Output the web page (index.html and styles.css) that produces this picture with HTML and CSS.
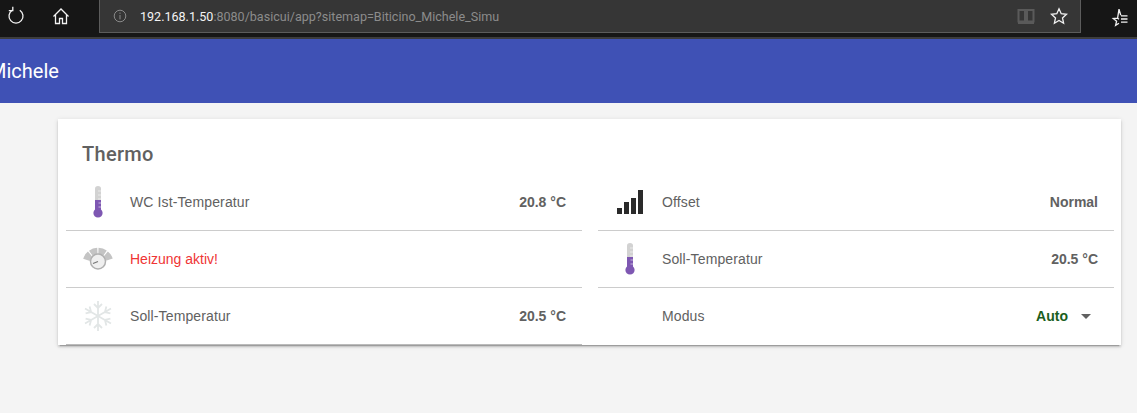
FILE: index.html
```html
<!DOCTYPE html>
<html lang="en">
<head>
<meta charset="UTF-8">
<title>Thermo</title>
<link rel="stylesheet" href="styles.css">
</head>
<body>
<div class="browser">
    <div class="nav">
        <svg class="tool" width="20" height="20" viewBox="0 0 20 20"><path d="M6.200 4.200A7 7 0 1 0 13.800 4.200" /><path d="M6.800 0.800V4.600H2.800" /></svg>
        <svg class="tool" width="20" height="20" viewBox="0 0 20 20"><path d="M2.500 10.500L10 3l7.500 7.500" /><path d="M4.500 9v8.500h4v-5h3v5h4V9" /></svg>
    </div>
    <div class="address">
        <svg class="info" width="14" height="14" viewBox="0 0 14 14"><circle cx="7" cy="7" r="5.800" /><path d="M7 6v4.400M7 3.600v1.200" /></svg>
        <span class="url"><b>192.168.1.50</b>:8080/basicui/app?sitemap=Biticino_Michele_Simu</span>
        <svg class="reader" width="18" height="16" viewBox="0 0 18 16"><path d="M1.500 2h6.500v11.500h-6.500zM10 2h6.500v11.500h-6.500zM1 15h16" /></svg>
        <svg class="tool star" width="18" height="18" viewBox="0 0 18 18"><path d="M9 1.800l2.200 4.900 5.300.6-4 3.600 1.100 5.300L9 13.500l-4.600 2.700 1.100-5.300-4-3.600 5.300-.6z" /></svg>
    </div>
    <div class="side">
        <svg class="tool" width="20" height="20" viewBox="0 0 20 20"><path d="M10 16.200l-3.400 2.100 1-4.100-3.300-2.700 4.300-.3L10 2.200l1.600 5.500h-0.600M8.600 11.200l1.400 1M12 8.800h6.500M12 12h6.500M12 15.200h6.500" /></svg>
    </div>
</div>

<header class="bar">
    <div class="bar-title">Michele</div>
</header>

<main class="card">
    <h2 class="card-title">Thermo</h2>
    <div class="rows">
        <div class="row">
            <svg class="icon" viewBox="0 0 32 32"><path class="th-glass" d="M13 2.500a3 2.500 0 0 1 6 0V15h-6z" /><path class="th-fill" d="M13 14h6v9.500a4.600 4.600 0 1 1-6 0z" /><path class="th-tick" d="M16 5h3M16 9h3M16 13h3M16.500 17h2.500M16.500 21h2.500" /></svg>
            <span class="label">WC Ist-Temperatur</span>
            <span class="value">20.8 °C</span>
        </div>
        <div class="row">
            <svg class="icon" viewBox="0 0 32 32"><rect class="bars" x="3" y="22" width="5" height="6" /><rect class="bars" x="10" y="16" width="5" height="12" /><rect class="bars" x="17" y="12" width="5" height="16" /><rect class="bars" x="24" y="4" width="5" height="24" /></svg>
            <span class="label">Offset</span>
            <span class="value">Normal</span>
        </div>
        <div class="row">
            <svg class="icon" viewBox="0 0 32 32"><path class="gauge" d="M5 17A11.500 11.500 0 0 1 27 17" /><circle class="dial" cx="16" cy="18.500" r="7.500" /><path class="needle" d="M16 18.500l-5 2" /></svg>
            <span class="label alert">Heizung aktiv!</span>
        </div>
        <div class="row">
            <svg class="icon" viewBox="0 0 32 32"><path class="th-glass" d="M13 2.500a3 2.500 0 0 1 6 0V15h-6z" /><path class="th-fill" d="M13 14h6v9.500a4.600 4.600 0 1 1-6 0z" /><path class="th-tick" d="M16 5h3M16 9h3M16 13h3M16.500 17h2.500M16.500 21h2.500" /></svg>
            <span class="label">Soll-Temperatur</span>
            <span class="value">20.5 °C</span>
        </div>
        <div class="row last-left">
            <svg class="icon" viewBox="0 0 32 32">
                <g class="flake">
                    <path d="M16 1v30M12 4l4 4 4-4M12 28l4-4 4 4" />
                    <path transform="rotate(60 16 16)" d="M16 1v30M12 4l4 4 4-4M12 28l4-4 4 4" />
                    <path transform="rotate(120 16 16)" d="M16 1v30M12 4l4 4 4-4M12 28l4-4 4 4" />
                </g>
            </svg>
            <span class="label">Soll-Temperatur</span>
            <span class="value">20.5 °C</span>
        </div>
        <div class="row last-right">
            <span class="icon"></span>
            <span class="label">Modus</span>
            <span class="value auto">Auto</span>
            <span class="caret"></span>
        </div>
    </div>
</main>
</body>
</html>
```

FILE: styles.css
```css
*{box-sizing:border-box;margin:0;padding:0;}
html,body{
    height:100%;
    overflow:hidden;
}
body{
    background:#f4f4f4;
    font-family:'Liberation Sans',Arial,sans-serif;
}
/* browser chrome */
.browser{
    display:flex;
    height:39px;
    background:#161616;
    border-bottom:2px solid #3d3d3d;
}
.nav{
    width:99px;
    flex:none;
    display:flex;
    gap:25px;
    padding:6px 0 0 6px;
}
.tool{
    fill:none;
    stroke:#f2f2f2;
    stroke-width:1.300;
}
.address{
    flex:1;
    height:33px;
    display:flex;
    align-items:center;
    background:#363636;
    border:solid #5c5c5c;
    border-width:0 1px 1px 1px;
    padding:0 12px 0 13px;
}
.info{
    fill:none;
    stroke:#8a8a8a;
    stroke-width:1;
    margin-right:13px;
}
.url{
    flex:1;
    font-family:'Roboto',sans-serif;
    font-size:12.550px;
    color:#8c8c8c;
}
.url b{
    font-weight:400;
    color:#f4f4f4;
}
.reader{
    fill:none;
    stroke:#5a5a5a;
    stroke-width:2;
    margin-right:15px;
}
.side{
    width:56px;
    flex:none;
    padding:7px 0 0 28px;
}
/* app bar */
.bar{
    height:64px;
    background:#3f51b5;
    display:flex;
    align-items:center;
    overflow:hidden;
}
.bar-title{
    margin-left:-11px;
    font-family:'Roboto',sans-serif;
    font-size:20px;
    color:#fff;
}
/* card */
.card{
    width:1063px;
    margin:16px 0 0 58px;
    padding:23px 7px 0 8px;
    background:#fff;
    box-shadow:0 2px 2px rgba(0,0,0,.14),0 3px 1px -2px rgba(0,0,0,.2),0 1px 5px rgba(0,0,0,.12);
}
.card-title{
    padding:0 0 8px 16px;
    font-family:'Roboto',sans-serif;
    font-size:20px;
    font-weight:500;
    letter-spacing:.3px;
    line-height:24px;
    color:#616161;
}
.rows{
    display:grid;
    grid-template-columns:516px 516px;
    column-gap:16px;
}
.row{
    height:57px;
    display:flex;
    align-items:center;
    gap:16px;
    padding:0 16px;
    border-bottom:1px solid #ccc;
    font-size:14px;
    color:#616161;
}
.last-left{
    border-bottom-color:#bbb;
}
.last-right{
    height:56px;
    border-bottom:0;
    padding-right:23px;
}
.icon{
    width:32px;
    height:32px;
    flex:none;
}
.label{
    flex:1;
    letter-spacing:.12px;
}
.alert{
    letter-spacing:0;
    color:#ef3535;
}
.value{
    font-weight:700;
}
.auto{
    color:#1b5e20;
}
.caret{
    width:0;
    height:0;
    margin-left:-3px;
    border:solid transparent;
    border-width:5px 5px 0;
    border-top-color:#616161;
}
/* svg icon parts */
.th-glass{fill:#d2d2d2;}
.th-fill{fill:#7e57b2;}
.th-tick{stroke:#fff;stroke-width:.8;opacity:.7;}
.bars{fill:#2a2a2a;}
.gauge{fill:none;stroke:#c4c4c4;stroke-width:8;stroke-dasharray:6.500 1;}
.dial{fill:#efefef;stroke:#b0b0b0;stroke-width:1.500;}
.needle{stroke:#777;stroke-width:1.200;}
.flake{fill:none;stroke:#e2e6e6;stroke-width:1.800;}
```
